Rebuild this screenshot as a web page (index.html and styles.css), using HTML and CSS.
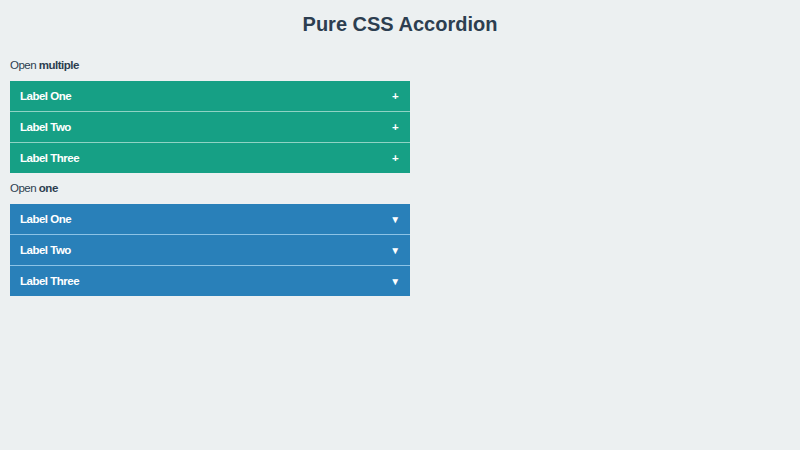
FILE: index.html
```html
<!DOCTYPE html>
<html lang="en">
  <head>
    <meta charset="UTF-8" />
    <meta name="viewport" content="width=device-width, initial-scale=1.0" />
    <title>Pure CSS Accordion</title>
    <link rel="stylesheet" href="styles.css">
  </head>
  <body>
    <h1>Pure CSS Accordion</h1>

    <h2>Open <b>multiple</b></h2>
    <div class="tabs">
      <div class="tab">
        <input type="checkbox" id="chck1" />
        <label class="tab-label" for="chck1">Label One</label>
        <div class="tab-content">Lorem ipsum dolor sit amet consectetur adipisicing elit.</div>
      </div>
      <div class="tab">
        <input type="checkbox" id="chck2" />
        <label class="tab-label" for="chck2">Label Two</label>
        <div class="tab-content">Lorem ipsum dolor sit amet consectetur adipisicing elit.</div>
      </div>
      <div class="tab">
        <input type="checkbox" id="chck3" />
        <label class="tab-label" for="chck3">Label Three</label>
        <div class="tab-content">Lorem ipsum dolor sit amet consectetur adipisicing elit.</div>
      </div>
    </div>

    <h2>Open <b>one</b></h2>
    <div class="tabs tabs-one">
      <div class="tab">
        <input type="radio" id="rd1" name="rd" />
        <label class="tab-label" for="rd1">Label One</label>
        <div class="tab-content">Lorem ipsum dolor sit amet consectetur adipisicing elit.</div>
      </div>
      <div class="tab">
        <input type="radio" id="rd2" name="rd" />
        <label class="tab-label" for="rd2">Label Two</label>
        <div class="tab-content">Lorem ipsum dolor sit amet consectetur adipisicing elit.</div>
      </div>
      <div class="tab">
        <input type="radio" id="rd3" name="rd" />
        <label class="tab-label" for="rd3">Label Three</label>
        <div class="tab-content">Lorem ipsum dolor sit amet consectetur adipisicing elit.</div>
      </div>
    </div>
  </body>
</html>
```

FILE: styles.css
```css
* {
  padding: 0;
  margin: 0;
  box-sizing: border-box;
}
body {
  color: #2c3e50;
  background: #ecf0f1;
  padding: 0 10px;
  font-family: "Liberation Sans", Arial, sans-serif;
}
h1 {
  font-size: 20px;
  line-height: 48px;
  text-align: center;
}
h2 {
  font-size: 11.5px;
  font-weight: normal;
  letter-spacing: -0.5px;
  line-height: 16px;
  margin: 9px 0 8px;
}
.tabs + h2 {
  margin-top: 7px;
}
input {
  display: none;
}
.tabs {
  width: 400px;
}
.tab {
  color: #fff;
}
.tab + .tab {
  border-top: 1px solid #8fd3c4;
}
.tab-label {
  display: flex;
  justify-content: space-between;
  align-items: center;
  height: 30px;
  padding: 0 10px;
  background: #16a085;
  font-size: 11.5px;
  font-weight: bold;
  letter-spacing: -0.5px;
  cursor: pointer;
}
.tab-label::after {
  content: "+";
  width: 10px;
  text-align: center;
}
.tab-content {
  display: none;
  padding: 10px;
  color: #2c3e50;
  background: #fff;
  font-size: 11px;
}
input:checked + .tab-label::after {
  content: "\2212";
}
input:checked ~ .tab-content {
  display: block;
}

/* single open version */
.tabs-one .tab + .tab {
  border-top-color: #8cc3e6;
}
.tabs-one .tab-label {
  background: #2980b9;
}
.tabs-one .tab-label::after,
.tabs-one input:checked + .tab-label::after {
  content: "\25BC";
  font-size: 10px;
}
```
